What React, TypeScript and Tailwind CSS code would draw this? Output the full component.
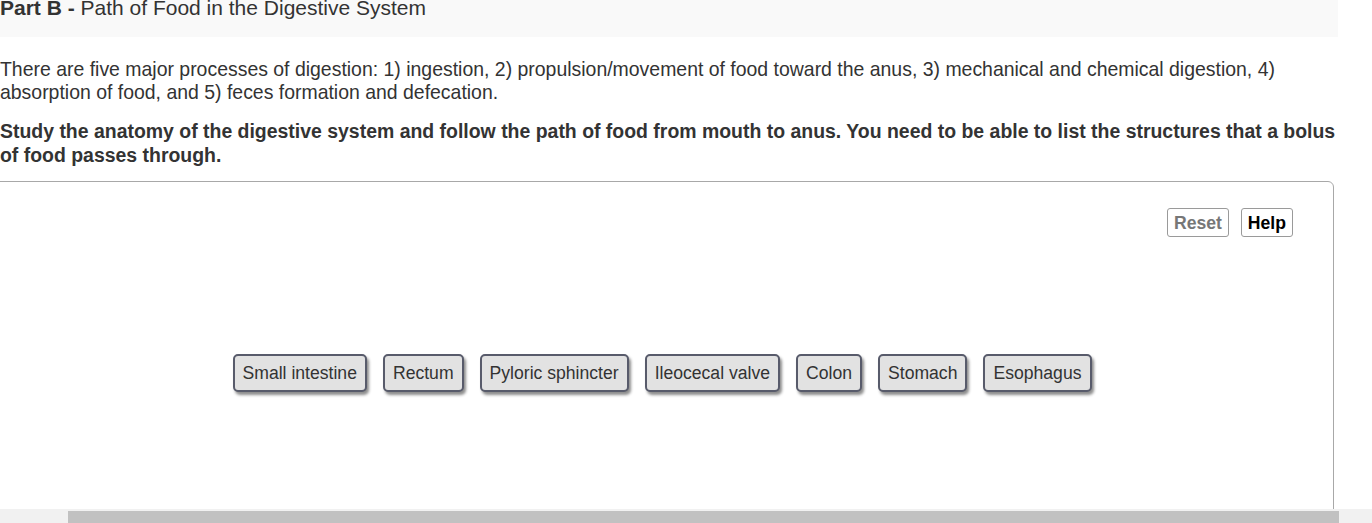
import React from "react";

const tokens = [
  "Small intestine",
  "Rectum",
  "Pyloric sphincter",
  "Ileocecal valve",
  "Colon",
  "Stomach",
  "Esophagus",
];

export default function App() {
  return (
    <div
      className="relative w-[1372px] h-[523px] overflow-hidden bg-white text-[#333333]"
      style={{ fontFamily: '"Liberation Sans", Arial, sans-serif' }}
    >
      <div className="w-[1338px]">
        <div className="h-[40px] bg-[#f9f9f9]">
          <h2 className="mt-[-3px] text-[21px] leading-[22px] font-normal text-[#333333] whitespace-nowrap">
            <span className="font-bold">Part B - </span>Path of Food in the Digestive System
          </h2>
        </div>
        <div className="pt-[21px] text-[19.45px]">
          <p className="leading-[23px]">
            There are five major processes of digestion: 1) ingestion, 2) propulsion/movement of food toward the anus, 3) mechanical and chemical digestion, 4) absorption of food, and 5) feces formation and defecation.
          </p>
          <p className="mt-[15px] leading-[24px] font-bold">
            Study the anatomy of the digestive system and follow the path of food from mouth to anus. You need to be able to list the structures that a bolus of food passes through.
          </p>
        </div>
        <div className="ml-[-10px] mt-[14px] w-[1344px] h-[360px] rounded-[6px] border border-[#a8a8a8]">
          <div className="flex justify-end gap-[12px] pt-[26px] pr-[40px]">
            <button className="h-[29px] px-[6px] rounded-[3px] border border-[#9a9a9a] bg-white text-[17.6px] leading-[20px] font-bold text-[#777777]">
              Reset
            </button>
            <button className="h-[29px] px-[6px] rounded-[3px] border border-[#9a9a9a] bg-white text-[17.6px] leading-[20px] font-bold text-black">
              Help
            </button>
          </div>
          <div className="flex justify-center gap-[16px] mt-[117px]">
            {tokens.map((t) => (
              <div
                key={t}
                className="h-[38px] px-[8px] flex items-center rounded-[5px] border-2 border-[#585b6b] bg-[#e2e2e2] text-[17.6px] text-[#333333] shadow-[2px_3px_3px_rgba(0,0,0,0.45)]"
              >
                {t}
              </div>
            ))}
          </div>
        </div>
      </div>
      <div className="absolute left-0 bottom-0 w-[1372px] h-[14px] bg-[#f1f1f1]">
        <div className="absolute left-[68px] top-[2px] w-[1271px] h-[12px] bg-[#c1c1c1]" />
      </div>
    </div>
  );
}
